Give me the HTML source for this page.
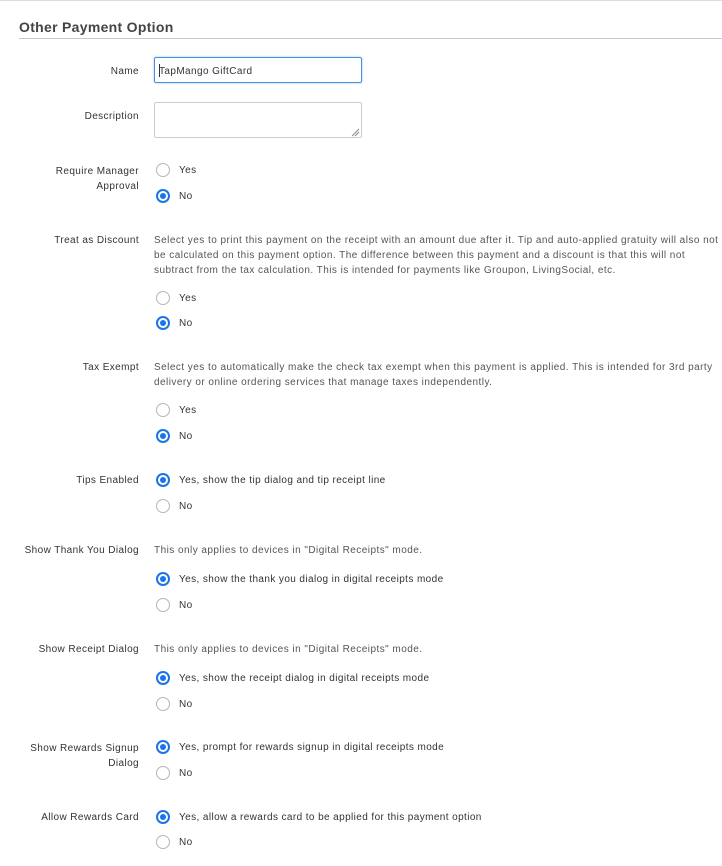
<!DOCTYPE html>
<html><head><meta charset="utf-8">
<style>
html,body{margin:0;padding:0;background:#fff;}
body{width:722px;height:866px;position:relative;overflow:hidden;font-family:"Liberation Sans",sans-serif;font-size:10px;color:#333;letter-spacing:0.4px;}
.a{position:absolute;line-height:15px;white-space:nowrap;margin-top:1px;}
.l{left:0;width:139px;text-align:right;color:#333;}
.d{left:154px;color:#555;letter-spacing:0.46px;}
.t{left:179px;color:#333;}
.r{position:absolute;left:156px;width:12px;height:12px;border:1px solid #b5b5b5;border-radius:50%;background:#fff;}
.r.c{width:10px;height:10px;border:2px solid #1a73e8;}
.r.c::after{content:"";position:absolute;left:2px;top:2px;width:6px;height:6px;border-radius:50%;background:#1a73e8;}
</style></head><body>
<div style="position:absolute;left:0;top:0;width:722px;height:1px;background:#ddd"></div>
<div class="a" style="left:19px;top:17px;font-size:14px;font-weight:bold;color:#444;line-height:18px;letter-spacing:0.3px">Other Payment Option</div>
<div style="position:absolute;left:19px;top:38px;width:703px;height:1px;background:#c9c9d6"></div>

<div class="a l" style="top:63px">Name</div>
<div style="position:absolute;left:154px;top:57px;width:206px;height:24px;border:1px solid #4a90d9;border-radius:2px;box-shadow:0 0 2px #9cc3ee"></div>
<div class="a" style="left:159px;top:63px;color:#333">TapMango GiftCard</div>
<div style="position:absolute;left:159px;top:64px;width:1px;height:13px;background:#333"></div>

<div class="a l" style="top:108px">Description</div>
<div style="position:absolute;left:154px;top:102px;width:206px;height:34px;border:1px solid #ccc;border-radius:2px"></div>
<svg style="position:absolute;left:351px;top:128px" width="9" height="9"><path d="M1 8L8 1M4 8L8 4" stroke="#888" stroke-width="1"/></svg>

<div class="a l" style="top:163px">Require Manager</div>
<div class="a l" style="top:178px">Approval</div>
<div class="r" style="top:163px"></div><div class="a t" style="top:162px">Yes</div>
<div class="r c" style="top:189px"></div><div class="a t" style="top:188px">No</div>

<div class="a l" style="top:232px">Treat as Discount</div>
<div class="a d" style="top:232px">Select yes to print this payment on the receipt with an amount due after it. Tip and auto-applied gratuity will also not<br>be calculated on this payment option. The difference between this payment and a discount is that this will not<br>subtract from the tax calculation. This is intended for payments like Groupon, LivingSocial, etc.</div>
<div class="r" style="top:291px"></div><div class="a t" style="top:290px">Yes</div>
<div class="r c" style="top:316px"></div><div class="a t" style="top:315px">No</div>

<div class="a l" style="top:359px">Tax Exempt</div>
<div class="a d" style="top:359px">Select yes to automatically make the check tax exempt when this payment is applied. This is intended for 3rd party<br>delivery or online ordering services that manage taxes independently.</div>
<div class="r" style="top:403px"></div><div class="a t" style="top:402px">Yes</div>
<div class="r c" style="top:429px"></div><div class="a t" style="top:428px">No</div>

<div class="a l" style="top:472px">Tips Enabled</div>
<div class="r c" style="top:473px"></div><div class="a t" style="top:472px">Yes, show the tip dialog and tip receipt line</div>
<div class="r" style="top:499px"></div><div class="a t" style="top:498px">No</div>

<div class="a l" style="top:542px">Show Thank You Dialog</div>
<div class="a d" style="top:542px">This only applies to devices in "Digital Receipts" mode.</div>
<div class="r c" style="top:572px"></div><div class="a t" style="top:571px">Yes, show the thank you dialog in digital receipts mode</div>
<div class="r" style="top:598px"></div><div class="a t" style="top:597px">No</div>

<div class="a l" style="top:641px">Show Receipt Dialog</div>
<div class="a d" style="top:641px">This only applies to devices in "Digital Receipts" mode.</div>
<div class="r c" style="top:671px"></div><div class="a t" style="top:670px">Yes, show the receipt dialog in digital receipts mode</div>
<div class="r" style="top:697px"></div><div class="a t" style="top:696px">No</div>

<div class="a l" style="top:740px">Show Rewards Signup</div>
<div class="a l" style="top:755px">Dialog</div>
<div class="r c" style="top:740px"></div><div class="a t" style="top:739px">Yes, prompt for rewards signup in digital receipts mode</div>
<div class="r" style="top:766px"></div><div class="a t" style="top:765px">No</div>

<div class="a l" style="top:809px">Allow Rewards Card</div>
<div class="r c" style="top:810px"></div><div class="a t" style="top:809px">Yes, allow a rewards card to be applied for this payment option</div>
<div class="r" style="top:835px"></div><div class="a t" style="top:834px">No</div>
</body></html>
